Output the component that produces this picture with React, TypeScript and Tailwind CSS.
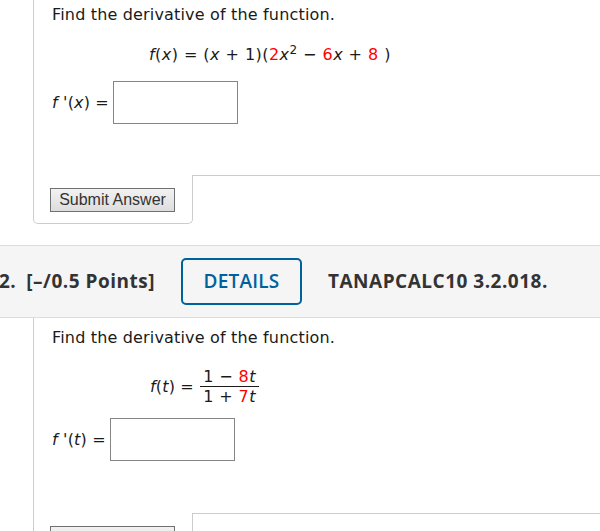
import type { ReactNode } from 'react';

const red = 'text-[#ff0000]';

function AnswerRow({ label, labelWidth }: { label: ReactNode; labelWidth: string }) {
  return (
    <div className="flex items-center">
      <span className={`flex-none leading-[19px] ${labelWidth}`}>{label}</span>
      <div className="h-[43px] w-[125px] flex-none border border-[#858585] bg-white" />
    </div>
  );
}

function Footer() {
  return (
    <div className="ml-[33px] flex">
      <div className="h-[49px] w-[160px] flex-none rounded-b-[5px] border-x border-b border-[#cccccc] pl-[16px] pt-[13px]">
        <button className="h-[24px] w-[125px] border border-[#707070] bg-gradient-to-b from-[#f2f2f2] to-[#dddddd] font-['Liberation_Sans',Arial,sans-serif] text-[16px] leading-[22px] tracking-normal text-[#333]">
          Submit Answer
        </button>
      </div>
      <div className="flex-1 border-t border-[#cccccc]" />
    </div>
  );
}

export default function App() {
  return (
    <div className="h-[531px] w-[600px] overflow-hidden bg-white font-['DejaVu_Sans',Verdana,sans-serif] text-[16px] tracking-[0.17px] text-[#1a1a1a]">
      {/* Question 1 body */}
      <div className="ml-[33px] h-[175px] border-l border-[#cccccc] pl-[18px] pt-[5px]">
        <p className="leading-[19px]">Find the derivative of the function.</p>
        <p className="mt-[21px] pl-[97px] leading-[19px] tracking-[0.45px] whitespace-pre">
          <i>f</i>(<i>x</i>) = (<i>x</i> + 1)(<span className={red}>2</span>
          <i>x</i>
          <sup>2</sup> − <span className={red}>6</span>
          <i>x</i> + <span className={red}>8</span> )
        </p>
        <div className="mt-[17px]">
          <AnswerRow
            labelWidth="w-[61px]"
            label={
              <>
                <i>f</i> '(<i>x</i>) =
              </>
            }
          />
        </div>
      </div>
      <Footer />

      {/* Question 2 header */}
      <div className="mt-[21px] flex h-[73px] items-center border-y border-[#dddddd] bg-[#f5f5f5] font-['Open_Sans',sans-serif] text-[19px] tracking-[0.5px] text-[#333]">
        <span className="ml-[-1px] font-bold">2.</span>
        <span className="ml-[10px] font-bold">[–/0.5 Points]</span>
        <div className="ml-[26px] flex h-[47px] w-[121px] flex-none items-center justify-center rounded-[5px] border-2 border-[#00629b] font-semibold tracking-[0.2px] text-[#00629b]">
          DETAILS
        </div>
        <span className="ml-[26px] font-bold">TANAPCALC10 3.2.018.</span>
      </div>

      {/* Question 2 body */}
      <div className="ml-[33px] h-[195px] border-l border-[#cccccc] pl-[18px] pt-[10px]">
        <p className="leading-[19px]">Find the derivative of the function.</p>
        <div className="mt-[20px] flex items-center pl-[98px]">
          <span className="leading-[19px] whitespace-pre">
            <i>f</i>(<i>t</i>) ={' '}
          </span>
          <div className="ml-[1px] flex flex-col items-center">
            <span className="px-[3px] leading-[19px] tracking-[0.4px] whitespace-pre">
              1 − <span className={red}>8</span>
              <i>t</i>
            </span>
            <span className="w-full border-t border-[#1a1a1a] px-[3px] text-center leading-[19px] tracking-[0.4px] whitespace-pre">
              1 + <span className={red}>7</span>
              <i>t</i>
            </span>
          </div>
        </div>
        <div className="mt-[12px]">
          <AnswerRow
            labelWidth="w-[58px]"
            label={
              <>
                <i>f</i> '(<i>t</i>) =
              </>
            }
          />
        </div>
      </div>
      <Footer />
    </div>
  );
}
